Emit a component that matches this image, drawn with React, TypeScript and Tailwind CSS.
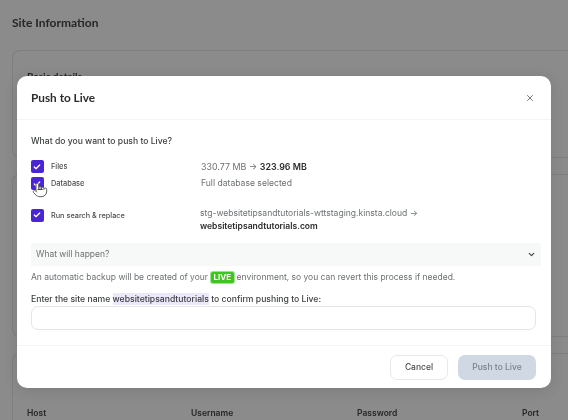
import { Check, ChevronDown, Pointer, X } from 'lucide-react'

function Checkbox() {
  return (
    <span className="flex h-[12.5px] w-[12.5px] shrink-0 items-center justify-center rounded-[2px] bg-[#4a25d6]">
      <Check size={8} strokeWidth={4} className="text-white" />
    </span>
  )
}

export default function App() {
  return (
    <div className="relative h-[420px] w-[568px] overflow-hidden bg-[#8a8b8a] font-['Inter',sans-serif] blur-[0.4px]">
      {/* Page behind the modal */}
      <div className="pl-3">
        <h1 className="flex h-[50px] items-center pb-[4px] font-['Lato',sans-serif] text-[12px] font-bold text-[#252626]">
          Site Information
        </h1>
        <div className="-mr-4 flex flex-col gap-4">
          <section className="h-[108px] rounded-l-lg border border-r-0 border-[#7d807e] px-[14px] pt-[18px]">
            <h2 className="font-['Lato',sans-serif] text-[10px] font-bold text-[#252626]">Basic details</h2>
          </section>
          <section className="h-[163px] rounded-l-lg border border-r-0 border-[#7d807e]" />
          <section className="h-[80px] rounded-l-lg border border-r-0 border-[#7d807e] px-[14px] pt-[53px]">
            <div className="grid grid-cols-[164px_166px_165px_auto] text-[8.5px] font-semibold text-[#252626]">
              <span>Host</span>
              <span>Username</span>
              <span>Password</span>
              <span>Port</span>
            </div>
          </section>
        </div>
      </div>

      {/* Modal */}
      <div className="absolute top-[76px] left-[17px] flex h-[312px] w-[534px] flex-col rounded-[10px] bg-white shadow-[0_2px_14px_rgba(0,0,0,0.12)]">
        <header className="flex h-[44px] shrink-0 items-center justify-between border-b border-[#f3f4f4] pr-[16px] pl-[14px]">
          <h2 className="font-['Lato',sans-serif] text-[11.8px] font-bold text-[#2b2c2c]">Push to Live</h2>
          <X size={10} strokeWidth={1.8} className="text-[#444748]" />
        </header>

        <div className="flex-1 pt-[15px] pr-[15px] pl-[14px]">
          <p className="text-[8.6px] leading-[12px] font-medium text-[#3c3e3f]">What do you want to push to Live?</p>

          <div className="mt-[11px] flex h-[17px] items-center">
            <Checkbox />
            <span className="ml-[7.5px] w-[150px] text-[7.4px] font-medium text-[#4b4d4e]">Files</span>
            <span className="text-[8.9px] text-[#6d7072]">
              330.77 MB → <b className="font-semibold text-[#2b2c2c]">323.96 MB</b>
            </span>
          </div>
          <div className="flex h-[17px] items-center">
            <Checkbox />
            <span className="ml-[7.5px] w-[150px] text-[7.4px] font-medium text-[#4b4d4e]">Database</span>
            <span className="text-[8.6px] text-[#6d7072]">Full database selected</span>
          </div>
          <div className="mt-[16px] flex items-start">
            <span className="mt-[1px]">
              <Checkbox />
            </span>
            <span className="mt-[3px] ml-[7.5px] w-[149px] text-[7.3px] font-medium text-[#4b4d4e]">Run search &amp; replace</span>
            <div className="-mt-[1px] text-[8.55px] leading-[13px] text-[#6d7072]">
              <div>stg-websitetipsandtutorials-wttstaging.kinsta.cloud →</div>
              <div className="font-semibold text-[#2b2c2c]">websitetipsandtutorials.com</div>
            </div>
          </div>

          <div className="mt-[10px] -mr-[5px] flex h-[23px] items-center justify-between bg-[#f7f8f8] pr-[5px] pl-[5px]">
            <span className="text-[8.5px] text-[#6d7072]">What will happen?</span>
            <ChevronDown size={9} strokeWidth={3} className="text-[#3c3e3f]" />
          </div>

          <p className="mt-[2px] flex h-[18px] items-center text-[8.5px] text-[#6d7072]">
            An automatic backup will be created of your
            <span className="mx-[2.5px] rounded-[2px] bg-[#3fc51f] px-[3px] text-[8px] leading-[11px] font-bold text-white shadow-[0_0_0_1px_#9fe28f]">LIVE</span>
            environment, so you can revert this process if needed.
          </p>

          <p className="mt-[6px] flex h-[14px] items-center text-[8.65px] font-medium whitespace-pre text-[#3c3e3f]">
            Enter the site name <span className="bg-[#ece8fb]">websitetipsandtutorials</span> to confirm pushing to Live:
          </p>
          <div className="h-[24px] rounded-[7px] border border-[#e2e6e6] bg-white" />
        </div>

        <footer className="flex h-[43px] shrink-0 items-start justify-end gap-[10px] border-t border-[#f3f4f4] pt-[9px] pr-[15px]">
          <button className="h-[25px] w-[58px] rounded-[7px] border border-[#e6e9e9] bg-white text-[8.5px] font-medium text-[#4b4d4e]">
            Cancel
          </button>
          <button className="h-[25px] w-[78px] rounded-[7px] bg-[#d0d9e3] text-[8.5px] font-medium text-[#78838e]">
            Push to Live
          </button>
        </footer>
      </div>

      {/* Mouse cursor */}
      <Pointer size={16} strokeWidth={1.4} className="absolute top-[182px] left-[32px] fill-white text-[#55585a]" />
    </div>
  )
}
